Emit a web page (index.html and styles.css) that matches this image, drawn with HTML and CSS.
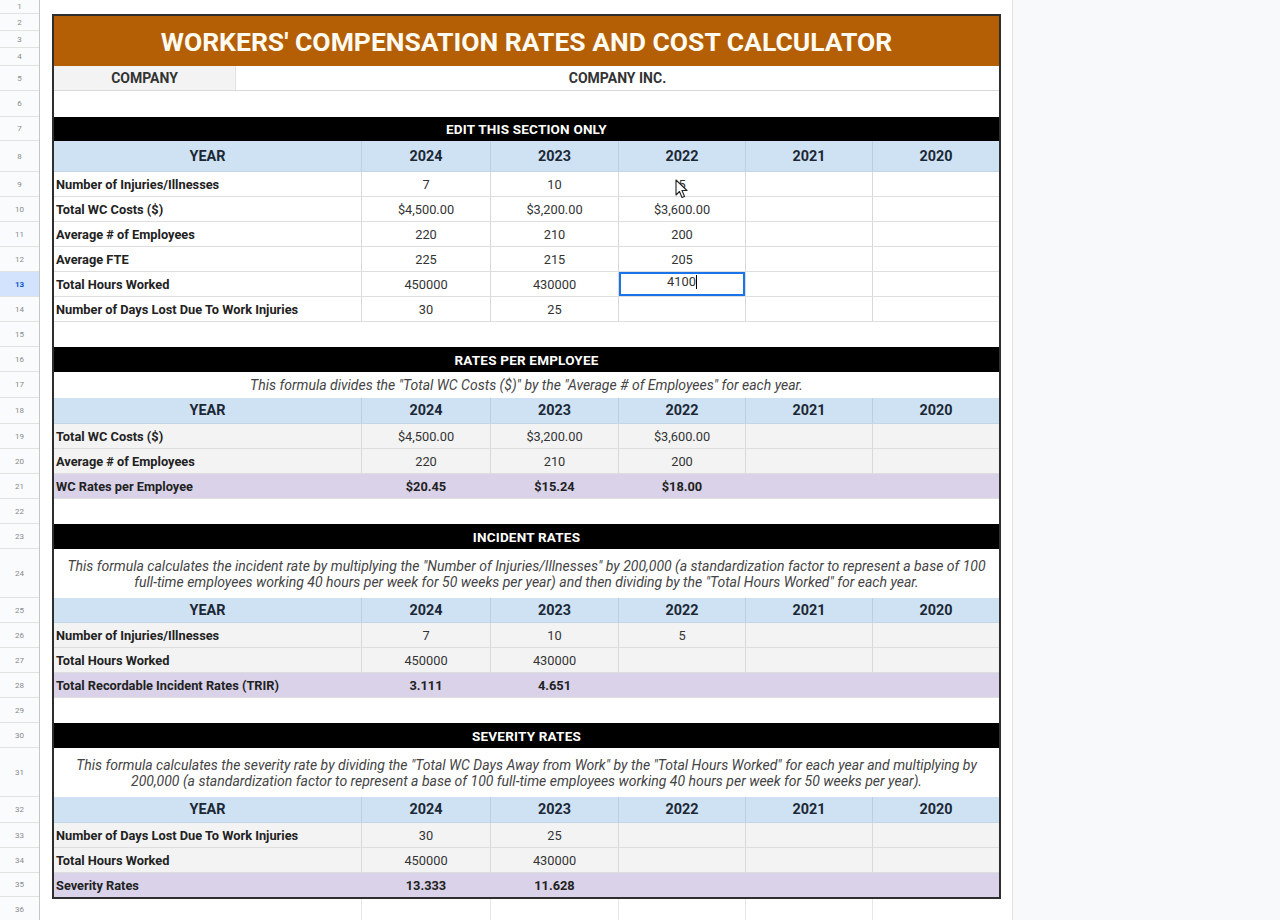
FILE: index.html
```html
<!DOCTYPE html>
<html lang="en">
<head>
<meta charset="utf-8">
<title>Workers' Compensation Rates and Cost Calculator</title>
<link rel="stylesheet" href="styles.css">
</head>
<body>
<div class="app">
  <div class="rownums">
    <div class="rn h14">1</div>
    <div class="rn h17">2</div>
    <div class="rn h17">3</div>
    <div class="rn h18">4</div>
    <div class="rn h25">5</div>
    <div class="rn h26">6</div>
    <div class="rn h24">7</div>
    <div class="rn h31">8</div>
    <div class="rn h25">9</div>
    <div class="rn h25">10</div>
    <div class="rn h25">11</div>
    <div class="rn h25">12</div>
    <div class="rn h25 active">13</div>
    <div class="rn h25">14</div>
    <div class="rn h25">15</div>
    <div class="rn h25">16</div>
    <div class="rn h26">17</div>
    <div class="rn h26">18</div>
    <div class="rn h25">19</div>
    <div class="rn h25">20</div>
    <div class="rn h25">21</div>
    <div class="rn h25">22</div>
    <div class="rn h25">23</div>
    <div class="rn h49">24</div>
    <div class="rn h25">25</div>
    <div class="rn h25">26</div>
    <div class="rn h25">27</div>
    <div class="rn h25">28</div>
    <div class="rn h25">29</div>
    <div class="rn h25">30</div>
    <div class="rn h49">31</div>
    <div class="rn h26">32</div>
    <div class="rn h25">33</div>
    <div class="rn h25">34</div>
    <div class="rn h24">35</div>
    <div class="rn h25">36</div>
  </div>

  <div class="sheet">
    <div class="frame">
      <div class="title">WORKERS' COMPENSATION RATES AND COST CALCULATOR</div>
      <div class="company-row">
        <div class="company-label">COMPANY</div>
        <div class="company-value">COMPANY INC.</div>
      </div>
      <div class="blank b26"></div>
      <div class="bar b24">EDIT THIS SECTION ONLY</div>

      <div class="trow head h31r"><div>YEAR</div><div>2024</div><div>2023</div><div>2022</div><div>2021</div><div>2020</div></div>
      <div class="trow"><div class="lbl">Number of Injuries/Illnesses</div><div>7</div><div>10</div><div class="cur-cell">5<svg class="mouse" width="14" height="20" viewBox="0 0 14 20"><path d="M1 1 L1 16 L4.5 12.5 L7 18.5 L9.5 17.5 L7 11.5 L12 11.5 Z" fill="#fff" stroke="#222" stroke-width="1.1" stroke-linejoin="round"/></svg></div><div></div><div></div></div>
      <div class="trow"><div class="lbl">Total WC Costs ($)</div><div>$4,500.00</div><div>$3,200.00</div><div>$3,600.00</div><div></div><div></div></div>
      <div class="trow"><div class="lbl">Average # of Employees</div><div>220</div><div>210</div><div>200</div><div></div><div></div></div>
      <div class="trow"><div class="lbl">Average FTE</div><div>225</div><div>215</div><div>205</div><div></div><div></div></div>
      <div class="trow"><div class="lbl">Total Hours Worked</div><div>450000</div><div>430000</div><div class="sel"><span class="caret">4100</span></div><div></div><div></div></div>
      <div class="trow"><div class="lbl">Number of Days Lost Due To Work Injuries</div><div>30</div><div>25</div><div></div><div></div><div></div></div>

      <div class="blank"></div>
      <div class="bar">RATES PER EMPLOYEE</div>
      <div class="desc d26">This formula divides the "Total WC Costs ($)" by the "Average # of Employees" for each year.</div>
      <div class="trow head r26"><div>YEAR</div><div>2024</div><div>2023</div><div>2022</div><div>2021</div><div>2020</div></div>
      <div class="trow gray"><div class="lbl">Total WC Costs ($)</div><div>$4,500.00</div><div>$3,200.00</div><div>$3,600.00</div><div></div><div></div></div>
      <div class="trow gray"><div class="lbl">Average # of Employees</div><div>220</div><div>210</div><div>200</div><div></div><div></div></div>
      <div class="trow result"><div class="lbl">WC Rates per Employee</div><div>$20.45</div><div>$15.24</div><div>$18.00</div><div></div><div></div></div>

      <div class="blank"></div>
      <div class="bar">INCIDENT RATES</div>
      <div class="desc two">This formula calculates the incident rate by multiplying the "Number of Injuries/Illnesses" by 200,000 (a standardization factor to represent a base of 100<br>full-time employees working 40 hours per week for 50 weeks per year) and then dividing by the "Total Hours Worked" for each year.</div>
      <div class="trow head"><div>YEAR</div><div>2024</div><div>2023</div><div>2022</div><div>2021</div><div>2020</div></div>
      <div class="trow gray"><div class="lbl">Number of Injuries/Illnesses</div><div>7</div><div>10</div><div>5</div><div></div><div></div></div>
      <div class="trow gray"><div class="lbl">Total Hours Worked</div><div>450000</div><div>430000</div><div></div><div></div><div></div></div>
      <div class="trow result"><div class="lbl">Total Recordable Incident Rates (TRIR)</div><div>3.111</div><div>4.651</div><div></div><div></div><div></div></div>

      <div class="blank"></div>
      <div class="bar">SEVERITY RATES</div>
      <div class="desc two">This formula calculates the severity rate by dividing the "Total WC Days Away from Work" by the "Total Hours Worked" for each year and multiplying by<br>200,000 (a standardization factor to represent a base of 100 full-time employees working 40 hours per week for 50 weeks per year).</div>
      <div class="trow head r26"><div>YEAR</div><div>2024</div><div>2023</div><div>2022</div><div>2021</div><div>2020</div></div>
      <div class="trow gray"><div class="lbl">Number of Days Lost Due To Work Injuries</div><div>30</div><div>25</div><div></div><div></div><div></div></div>
      <div class="trow gray"><div class="lbl">Total Hours Worked</div><div>450000</div><div>430000</div><div></div><div></div><div></div></div>
      <div class="trow result last"><div class="lbl">Severity Rates</div><div>13.333</div><div>11.628</div><div></div><div></div><div></div></div>
    </div>
    <div class="trail"><div></div><div></div><div></div><div></div><div></div><div></div></div>
  </div>

  <div class="outside"></div>
</div>
</body>
</html>
```

FILE: styles.css
```css
* { box-sizing: border-box; }

html, body {
  margin: 0;
  padding: 0;
  background: #ffffff;
  font-family: Roboto, "Liberation Sans", Arial, sans-serif;
  color: #222;
}

.app {
  display: flex;
  width: 1280px;
  height: 920px;
  overflow: hidden;
}

/* row numbers */
.rownums {
  width: 40px;
  flex: 0 0 40px;
  border-right: 1px solid #c4c7c5;
  background: #f9fbfd;
}
.rn {
  display: flex;
  align-items: center;
  justify-content: center;
  font-size: 8px;
  color: #8a8a8a;
  border-bottom: 1px solid #e1e3e1;
}
.rn.active {
  background: #d3e3fd;
  color: #0b57d0;
  font-weight: 700;
}
.h14 { height: 14px; }
.h17 { height: 17px; }
.h18 { height: 18px; }
.h24 { height: 24px; }
.h25 { height: 25px; }
.h26 { height: 26px; }
.h31 { height: 31px; }
.h49 { height: 49px; }

/* sheet */
.sheet {
  width: 973px;
  flex: 0 0 973px;
  padding: 14px 12px 0 12px;
  border-right: 1px solid #e0e0e0;
  background: #fff;
}

.outside {
  flex: 1;
  background: #f8f9fa;
}

.frame {
  width: 949px;
  border: 2px solid #2e2e2e;
}

.title {
  height: 50px;
  background: #b45f06;
  color: #fffbf0;
  font-weight: 700;
  font-size: 26.5px;
  display: flex;
  align-items: center;
  justify-content: center;
}

.company-row {
  height: 25px;
  display: flex;
  border-bottom: 1px solid #d9d9d9;
  font-weight: 700;
  font-size: 14px;
  color: #333;
}
.company-label {
  width: 182px;
  background: #f3f3f3;
  border-right: 1px solid #e3e3e3;
  display: flex;
  align-items: center;
  justify-content: center;
}
.company-value {
  flex: 1;
  display: flex;
  align-items: center;
  justify-content: center;
}

.blank { height: 25px; background: #fff; }
.blank.b26 { height: 26px; }

.bar {
  height: 25px;
  background: #000;
  color: #fff;
  font-weight: 700;
  font-size: 13.5px;
  letter-spacing: 0.2px;
  display: flex;
  align-items: center;
  justify-content: center;
}
.bar.b24 { height: 24px; }

.desc {
  height: 25px;
  display: flex;
  align-items: center;
  justify-content: center;
  text-align: center;
  font-style: italic;
  font-size: 14px;
  line-height: 16px;
  color: #444;
  background: #fff;
}
.desc.d26 { height: 26px; }
.desc.two { height: 49px; padding-top: 1px; }

.trow {
  display: grid;
  grid-template-columns: 308px 129px 128px 127px 127px 126px;
  height: 25px;
  border-bottom: 1px solid #dedede;
  font-size: 12.8px;
  color: #333;
}
.trow > div {
  display: flex;
  align-items: center;
  justify-content: center;
  border-right: 1px solid #d9d9d9;
  white-space: nowrap;
}
.trow > div:last-child { border-right: none; }
.trow > .lbl {
  justify-content: flex-start;
  padding-left: 2px;
  font-weight: 700;
  color: #222;
}

.trow.head {
  background: #cfe2f3;
  font-weight: 700;
  font-size: 14.4px;
  color: #1c2836;
  border-bottom: 1px solid #c4d6e6;
}
.trow.head > div { border-right-color: #bccfe0; }
.trow.h31r { height: 31px; }
.trow.r26 { height: 26px; }

.trow.gray { background: #f3f3f3; }
.trow.result {
  background: #d9d2e9;
  font-weight: 700;
  color: #222;
}
.trow.result > div { border-right-color: transparent; }
.trow.last { border-bottom: none; height: 24px; }

.sel {
  box-shadow: inset 0 0 0 2px #1a73e8;
}
.caret {
  border-right: 1px solid #000;
  line-height: 14px;
  margin-top: -4px;
}

.cur-cell { position: relative; }
.mouse {
  position: absolute;
  left: 56px;
  top: 7px;
}

.trail {
  display: grid;
  grid-template-columns: 310px 129px 128px 127px 127px 128px;
  height: 23px;
}
.trail > div { border-right: 1px solid #e6e6e6; }
.trail > div:last-child { border-right: none; }
```
